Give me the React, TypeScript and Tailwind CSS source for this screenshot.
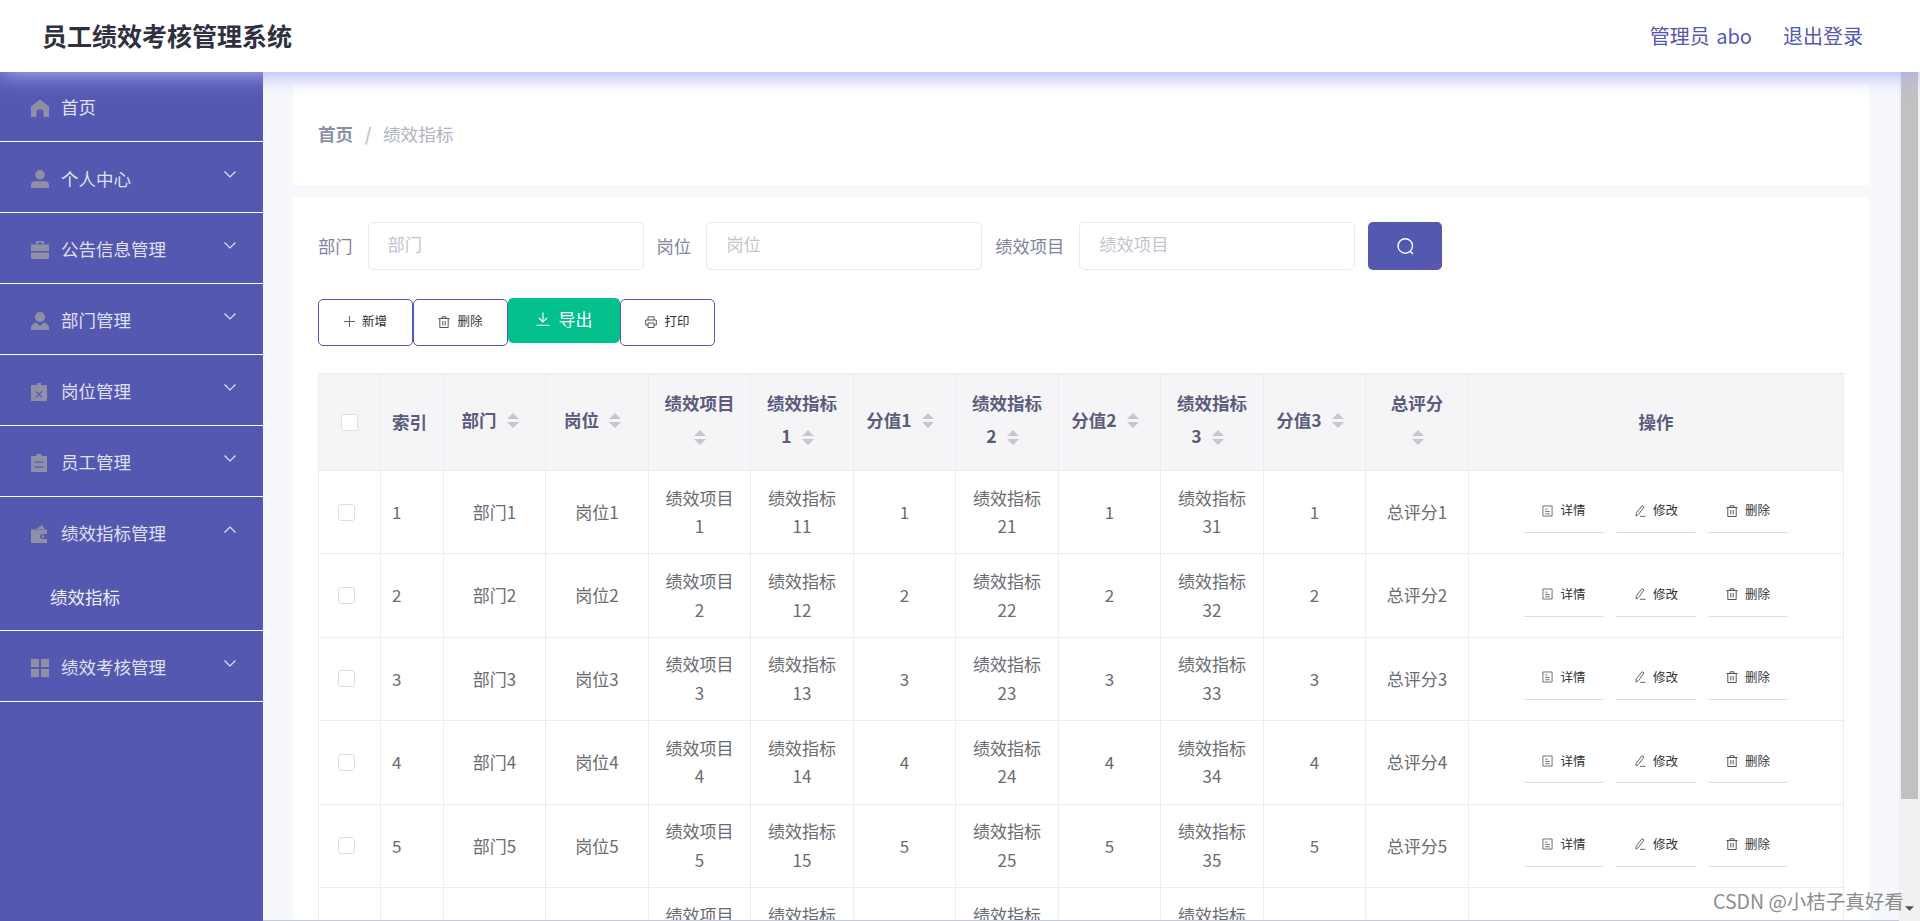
import React, { FC, ReactNode } from 'react';

const FONT = 'font-["Noto_Sans_CJK_SC","Microsoft_YaHei",sans-serif]';

// sidebar icons, all filled on an 18x18 box
const sideIcons: Record<string, ReactNode> = {
  home: <path d="M9 .5 18 7.500V18h-5.500v-4.500Q12.500 10.500 9 10.500T5.500 13.500V18H0V7.500Z" />,
  user: (
    <>
      <circle cx="9" cy="4.800" r="4.800" />
      <path d="M0 18v-3q0-3.800 4-3.800h10q4 0 4 3.800v3Z" />
    </>
  ),
  case: (
    <>
      <path d="M5 3.500V1q0-1 1-1h6q1 0 1 1v2.500h-1.600V1.500H6.600v2Z" />
      <path d="M0 3.500h18v6.500H0ZM0 11.500h18V18H0Z" />
    </>
  ),
  custom: (
    <>
      <circle cx="9" cy="5" r="5" />
      <path d="M-1 18q1-6 6-7.500L9 14l4-3.500q5 1.500 6 7.500Z" />
    </>
  ),
  release: (
    <>
      <path d="M6 0h4v2H6Z" />
      <path
        fillRule="evenodd"
        d="M0 2h16v16H0ZM5.200 8l2.800 2.600L10.800 8l.8.800-2.800 2.600 2.800 2.600-.8.800L8 12.200l-2.800 2.600-.8-.800L7.200 11.400 4.400 8.800Z"
      />
    </>
  ),
  order: (
    <>
      <path d="M5.500 0h5v2h-5Z" />
      <path fillRule="evenodd" d="M0 2h16v16H0ZM3.500 7.500v1.300h9V7.500ZM3.500 12.500v1.300h9v-1.300Z" />
    </>
  ),
  wallet: (
    <>
      <path d="M5 4 11 0l2.500 4Z" />
      <path fillRule="evenodd" d="M0 4.500h16V9h-4.500a2.500 2.500 0 0 0 0 5H16v4H0Z" />
      <circle cx="12" cy="11.500" r="1.300" />
    </>
  ),
  grid: <path d="M0 0h8v8H0ZM10 0h8v8h-8ZM0 10h8v8H0ZM10 10h8v8h-8Z" />,
};

const SideIcon: FC<{ name: string }> = ({ name }) => (
  <svg viewBox="0 0 18 18" className="w-[18px] h-[18px] mr-[12px] -ml-[1px] shrink-0 fill-[#8f90a6]">
    {sideIcons[name]}
  </svg>
);

const Chevron: FC<{ up?: boolean }> = ({ up }) => (
  <svg viewBox="0 0 12 7" className="absolute right-[27px] top-[29px] w-[12px] h-[7px] fill-none stroke-[#e4e5f5] stroke-[1.2]">
    <path d={up ? 'M.5 6.500 6 1l5.500 5.500' : 'M.5.500 6 6 11.500.500'} />
  </svg>
);

const menu = [
  { icon: 'user', label: '个人中心', pad: 'pt-[4px]' },
  { icon: 'case', label: '公告信息管理', pad: 'pt-[3px]' },
  { icon: 'custom', label: '部门管理', pad: 'pt-[3px]' },
  { icon: 'release', label: '岗位管理', pad: 'pt-[3px]' },
  { icon: 'order', label: '员工管理', pad: 'pt-[3px]' },
];

const Sidebar: FC = () => (
  <aside className="w-[263px] shrink-0 bg-[#5558b1] text-[17.500px] text-[#dfe0f3]">
    <div className="flex items-center h-[70px] pl-[32px] pt-[2px] border-b border-white">
      <SideIcon name="home" />
      首页
    </div>
    {menu.map((m) => (
      <div key={m.label} className={`relative flex items-center h-[71px] pl-[32px] border-b border-white ${m.pad}`}>
        <SideIcon name={m.icon} />
        {m.label}
        <Chevron />
      </div>
    ))}
    <div className="h-[134px] border-b border-white">
      <div className="relative flex items-center h-[71px] pl-[32px] pt-[2px]">
        <SideIcon name="wallet" />
        绩效指标管理
        <Chevron up />
      </div>
      <div className="flex items-center h-[58px] pl-[50px] text-[#eeeefa]">绩效指标</div>
    </div>
    <div className="relative flex items-center h-[71px] pl-[32px] pt-[3px] border-b border-white">
      <SideIcon name="grid" />
      绩效考核管理
      <Chevron />
    </div>
  </aside>
);

const SearchIcon = () => (
  <svg viewBox="0 0 16 16" className="w-[17px] h-[17px] fill-none stroke-white stroke-[1.300]">
    <circle cx="7.800" cy="7.500" r="6.800" />
    <path d="m12.500 12.500 2.500 2.500" />
  </svg>
);

const PlusIcon = () => (
  <svg viewBox="0 0 12 12" className="w-[11px] h-[11px] fill-none stroke-[#555] stroke-1">
    <path d="M6 0v12M0 6h12" />
  </svg>
);

const TrashIcon = () => (
  <svg viewBox="0 0 12 12" className="w-[12px] h-[12px] fill-none stroke-[#444] stroke-[0.900]">
    <path d="M.5 2.500h11M4 2.500V.8h4v1.700M1.800 2.500v9h8.400v-9M4.800 5v4.500M7.200 5v4.500" />
  </svg>
);

const PrintIcon = () => (
  <svg viewBox="0 0 12 12" className="w-[12px] h-[12px] fill-none stroke-[#444] stroke-[0.900]">
    <path d="M3 4V.8h6V4M3 9H.7V4h10.600v5H9M3 7h6v4.500H3Z" />
  </svg>
);

const DownloadIcon = () => (
  <svg viewBox="0 0 14 14" className="w-[14px] h-[14px] fill-none stroke-white stroke-[1.100]">
    <path d="M7 .5v9M3 6l4 4 4-4M.5 13.300h13" />
  </svg>
);

const DocIcon = () => (
  <svg viewBox="0 0 12 12" className="w-[11px] h-[12px] fill-none stroke-[#555] stroke-[0.900]">
    <path d="M1 .5h10v11H1ZM3.500 4h2.500M3.500 6.500h5M3.500 9h5" />
  </svg>
);

const EditIcon = () => (
  <svg viewBox="0 0 12 12" className="w-[12px] h-[12px] fill-none stroke-[#555] stroke-[0.900]">
    <path d="M8 .7 10 2 4.500 9.500 2 11l.2-2.800ZM6 11.300h5.500" />
  </svg>
);

const TopButton: FC<{ icon: ReactNode; children: ReactNode }> = ({ icon, children }) => (
  <button className="flex items-center justify-center gap-[7px] w-[95px] h-[47px] pb-[2px] bg-white border border-[#5558b1] rounded-[5px] text-[12.500px] text-[#333]">
    {icon}
    {children}
  </button>
);

const RowAction: FC<{ icon: ReactNode; children: ReactNode }> = ({ icon, children }) => (
  <button className="flex items-center justify-center gap-[7px] w-[82px] h-[42px] pb-[2px] bg-white border-b border-[#dcdde3] rounded-[3px] text-[12.500px] text-[#333]">
    {icon}
    {children}
  </button>
);

const Field: FC<{ label: string }> = ({ label }) => (
  <div className="flex items-center gap-[15px]">
    <span className="text-[17.300px] text-[#7f83a3]">{label}</span>
    <input
      placeholder={label}
      readOnly
      className="w-[276px] h-[48px] px-[19px] pb-[5px] text-[17.300px] bg-white border border-[#e8eaf0] rounded-[5px] outline-none placeholder:text-[#c3c6ce]"
    />
  </div>
);

const Caret = () => (
  <svg viewBox="0 0 12 15" className="inline-block w-[12px] h-[15px] ml-[10px] mr-[9px] -mt-[2px] align-middle fill-[#c5c7d0]">
    <path d="M6 0 12 6H0ZM0 9h12L6 15Z" />
  </svg>
);

const Checkbox: FC<{ className: string }> = ({ className }) => (
  <span className={`block w-[17px] h-[17px] bg-white border border-[#dcdfe6] rounded-[3px] ${className}`} />
);

const widths = [
  'w-[62px]', 'w-[63px]', 'w-[102px]', 'w-[103px]', 'w-[102px]', 'w-[103px]', 'w-[102px]',
  'w-[103px]', 'w-[102px]', 'w-[103px]', 'w-[102px]', 'w-[103px]', 'w-[375px]',
];

const th = 'border border-[#ebebf0] px-[8px] pb-[6px] text-center font-bold text-[17.500px] leading-[33px] text-[#5b5c7c]';
const td = 'border border-[#ebebf0] px-[8px] text-center leading-[28.500px] text-[#6a6c72]';

const Table: FC = () => (
  <table className="table-fixed w-[1525px] border-collapse text-[17px]">
    <colgroup>
      {widths.map((w, i) => (
        <col key={i} className={w} />
      ))}
    </colgroup>
    <thead>
      <tr className="h-[97px] bg-[#f5f5f8]">
        <th className={th}>
          <Checkbox className="ml-[14px] mt-[6px]" />
        </th>
        <th className={`${th} !px-[11px] !pb-[1px] !text-left`}>索引</th>
        <th className={th}>部门<Caret /></th>
        <th className={th}>岗位<Caret /></th>
        <th className={th}>绩效项目<br /><Caret /></th>
        <th className={th}>绩效指标<br />1<Caret /></th>
        <th className={th}>分值1<Caret /></th>
        <th className={th}>绩效指标<br />2<Caret /></th>
        <th className={th}>分值2<Caret /></th>
        <th className={th}>绩效指标<br />3<Caret /></th>
        <th className={th}>分值3<Caret /></th>
        <th className={th}>总评分<br /><Caret /></th>
        <th className={`${th} !pb-[1px]`}>操作</th>
      </tr>
    </thead>
    <tbody>
      {[1, 2, 3, 4, 5, 6].map((n) => (
        <tr key={n} className="h-[83.400px] bg-white">
          <td className={td}>
            <Checkbox className="ml-[11px]" />
          </td>
          <td className={`${td} !px-[11px] !text-left`}>{n}</td>
          <td className={td}>部门{n}</td>
          <td className={td}>岗位{n}</td>
          <td className={td}>绩效项目<br />{n}</td>
          <td className={td}>绩效指标<br />1{n}</td>
          <td className={td}>{n}</td>
          <td className={td}>绩效指标<br />2{n}</td>
          <td className={td}>{n}</td>
          <td className={td}>绩效指标<br />3{n}</td>
          <td className={td}>{n}</td>
          <td className={td}>总评分{n}</td>
          <td className={td}>
            <div className="flex justify-center gap-[10px]">
              <RowAction icon={<DocIcon />}>详情</RowAction>
              <RowAction icon={<EditIcon />}>修改</RowAction>
              <RowAction icon={<TrashIcon />}>删除</RowAction>
            </div>
          </td>
        </tr>
      ))}
    </tbody>
  </table>
);

const App: FC = () => (
  <div className={`${FONT} relative flex flex-col h-[921px] overflow-hidden bg-[#f7f8fb]`}>
    <header className="relative z-10 flex items-center justify-between h-[72px] pl-[42px] pr-[57px] bg-white shadow-[0_3px_20px_rgb(171,173,250)]">
      <h1 className="text-[25px] font-bold text-[#2f3040]">员工绩效考核管理系统</h1>
      <div className="flex gap-[31px] text-[20px] text-[#5558b1]">
        <span className="[word-spacing:2px]">管理员 abo</span>
        <span>退出登录</span>
      </div>
    </header>

    <div className="flex flex-1 min-h-0">
      <Sidebar />
      <main className="flex-1 min-w-0 pl-[30px] pr-[51px] pt-[13px] overflow-hidden border-b border-[#c9c9dc]">
        <div className="flex items-center gap-[11.500px] h-[100px] pl-[25px] pb-[2px] bg-white text-[17.600px]">
          <span className="font-bold text-[#8d90a8]">首页</span>
          <span className="font-bold text-[#c3c5cf]">/</span>
          <span className="text-[#b0b3c0]">绩效指标</span>
        </div>
        <div className="mt-[12px] p-[25px] bg-white">
          <div className="flex items-center gap-[13px]">
            <Field label="部门" />
            <Field label="岗位" />
            <Field label="绩效项目" />
            <button className="flex items-center justify-center w-[74px] h-[48px] bg-[#5558b1] rounded-[5px]">
              <SearchIcon />
            </button>
          </div>
          <div className="flex items-start mt-[29px]">
            <TopButton icon={<PlusIcon />}>新增</TopButton>
            <TopButton icon={<TrashIcon />}>删除</TopButton>
            <button className="flex items-center justify-center gap-[9px] w-[112px] h-[45px] -mt-[1px] pb-[4px] bg-[#04c08c] rounded-[5px] text-[17px] text-white">
              <DownloadIcon />
              导出
            </button>
            <TopButton icon={<PrintIcon />}>打印</TopButton>
          </div>
          <div className="mt-[27px]">
            <Table />
          </div>
        </div>
      </main>
    </div>

    {/* fake browser scrollbar and the watermark, both lie over the page */}
    <div className="absolute right-0 top-[72px] bottom-0 w-[21px] bg-[#f1f1f1]">
      <div className="ml-[2px] w-[17px] h-[727px] bg-[#c1c1c1]" />
      <svg viewBox="0 0 8 4" className="absolute left-[6px] bottom-[10px] w-[9px] h-[5px] fill-[#505050]">
        <path d="M0 0h8L4 4Z" />
      </svg>
    </div>
    <div className="absolute left-[1713px] top-[888px] text-[19.500px] leading-[26px] whitespace-nowrap text-[#8d8d8d]">
      CSDN @小桔子真好看
    </div>
  </div>
);

export default App;
